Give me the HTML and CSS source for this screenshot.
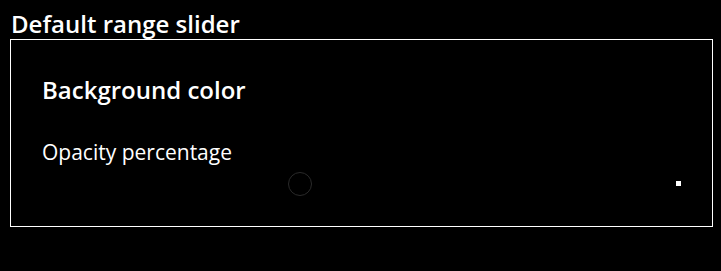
FILE: index.html
```html
<!DOCTYPE html>
<html>
<head>
<meta charset="utf-8">
<link rel="stylesheet" href="styles.css">
</head>
<body>
<h2 class="title">Default range slider</h2>
<div class="panel">
  <h3 class="heading">Background color</h3>
  <div class="label">Opacity percentage</div>
  <div class="slider">
    <div class="track"></div>
    <div class="thumb" style="left: 246px"></div>
    <div class="end"></div>
  </div>
</div>
</body>
</html>
```
FILE: styles.css
```css
html, body {
  margin: 0;
  background: #000;
  color: #fff;
  font-family: "Open Sans", "Noto Sans", sans-serif;
}
body {
  padding: 8px 9px 0 10px;
}
.title {
  margin: 0 0 0 1px;
  font-size: 24px;
  font-weight: 600;
  line-height: 31px;
  height: 31px;
}
.panel {
  width: 639px;
  height: 186px;
  border: 1px solid #fff;
  padding: 0 31px;
  box-sizing: content-box;
}
.heading {
  margin: 34px 0 0 0;
  font-size: 24px;
  font-weight: 600;
  line-height: 32px;
}
.label {
  margin-top: 32px;
  font-size: 21px;
  line-height: 28px;
}
.slider {
  position: relative;
  height: 26px;
  margin-top: 6px;
}
.thumb {
  position: absolute;
  top: 0;
  width: 22px;
  height: 22px;
  border: 1px solid #2a2a2a;
  border-radius: 50%;
}
.end {
  position: absolute;
  right: 0;
  top: 9px;
  width: 5px;
  height: 5px;
  background: #fff;
}
```
